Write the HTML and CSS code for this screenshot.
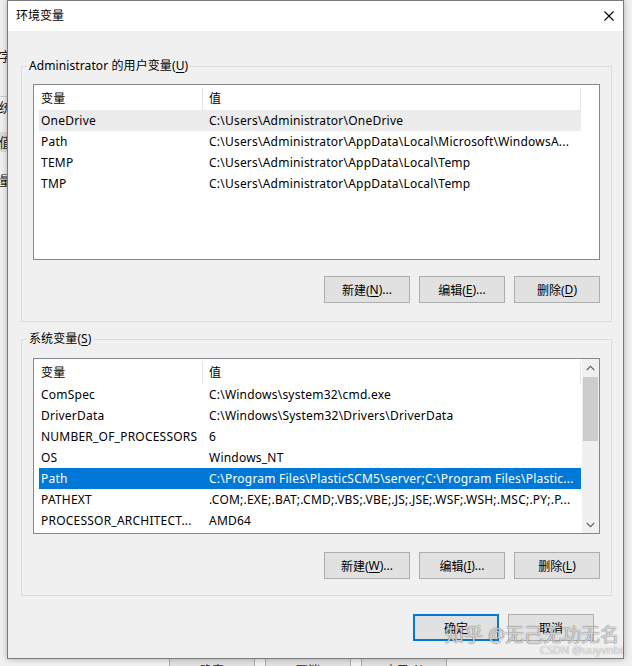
FILE: index.html
```html
<!DOCTYPE html>
<html lang="zh-CN">
<head>
<meta charset="utf-8">
<title>环境变量</title>
<link rel="stylesheet" href="styles.css">
</head>
<body>
<div class="bgwin">
  <div class="bg-side">
    <div class="bg-item bg-i1">文字</div>
    <div class="bg-item bg-i2 bg-line">系统</div>
    <div class="bg-item bg-i3 bg-sel">数值</div>
    <div class="bg-item bg-i4">变量</div>
  </div>
  <div class="bg-footer">
    <div class="bg-btn">确定</div>
    <div class="bg-btn">取消</div>
    <div class="bg-btn">应用(<u>A</u>)</div>
  </div>
</div>

<div class="dialog">
  <div class="titlebar">
    <span class="title">环境变量</span>
    <svg class="close" width="10" height="10" viewBox="0 0 10 10"><path d="M0.5 0.5 L9.5 9.5 M9.5 0.5 L0.5 9.5" stroke="#000" stroke-width="1.1" fill="none"/></svg>
  </div>
  <div class="content">
    <fieldset class="group group-user">
      <legend>Administrator 的用户变量(<u>U</u>)</legend>
      <div class="lv">
        <div class="lv-main">
          <div class="lv-head">
            <div class="c1 hd">变量</div>
            <div class="c2 hd">值</div>
          </div>
          <div class="row hover"><div class="c1">OneDrive</div><div class="c2">C:\Users\Administrator\OneDrive</div></div>
          <div class="row"><div class="c1">Path</div><div class="c2">C:\Users\Administrator\AppData\Local\Microsoft\WindowsA...</div></div>
          <div class="row"><div class="c1">TEMP</div><div class="c2">C:\Users\Administrator\AppData\Local\Temp</div></div>
          <div class="row"><div class="c1">TMP</div><div class="c2">C:\Users\Administrator\AppData\Local\Temp</div></div>
        </div>
      </div>
      <div class="btn-row">
        <div class="btn">新建(<u>N</u>)...</div>
        <div class="btn">编辑(<u>E</u>)...</div>
        <div class="btn">删除(<u>D</u>)</div>
      </div>
    </fieldset>

    <fieldset class="group group-sys">
      <legend>系统变量(<u>S</u>)</legend>
      <div class="lv">
        <div class="lv-main">
          <div class="lv-head">
            <div class="c1 hd">变量</div>
            <div class="c2 hd">值</div>
          </div>
          <div class="row"><div class="c1">ComSpec</div><div class="c2">C:\Windows\system32\cmd.exe</div></div>
          <div class="row"><div class="c1">DriverData</div><div class="c2">C:\Windows\System32\Drivers\DriverData</div></div>
          <div class="row"><div class="c1">NUMBER_OF_PROCESSORS</div><div class="c2">6</div></div>
          <div class="row"><div class="c1">OS</div><div class="c2">Windows_NT</div></div>
          <div class="row selected"><div class="c1">Path</div><div class="c2">C:\Program Files\PlasticSCM5\server;C:\Program Files\Plastic...</div></div>
          <div class="row"><div class="c1">PATHEXT</div><div class="c2">.COM;.EXE;.BAT;.CMD;.VBS;.VBE;.JS;.JSE;.WSF;.WSH;.MSC;.PY;.P...</div></div>
          <div class="row"><div class="c1">PROCESSOR_ARCHITECT...</div><div class="c2">AMD64</div></div>
        </div>
        <div class="scroll">
          <div class="sb-arrow"><svg width="9" height="6" viewBox="0 0 9 6"><path d="M0.8 5 L4.5 1.3 L8.2 5" stroke="#606060" stroke-width="1.1" fill="none"/></svg></div>
          <div class="sb-track"><div class="sb-thumb"></div></div>
          <div class="sb-arrow"><svg width="9" height="6" viewBox="0 0 9 6"><path d="M0.8 1 L4.5 4.7 L8.2 1" stroke="#606060" stroke-width="1.1" fill="none"/></svg></div>
        </div>
      </div>
      <div class="btn-row">
        <div class="btn">新建(<u>W</u>)...</div>
        <div class="btn">编辑(<u>I</u>)...</div>
        <div class="btn">删除(<u>L</u>)</div>
      </div>
    </fieldset>

    <div class="footer">
      <div class="btn btn-default">确定</div>
      <div class="btn">取消</div>
    </div>
  </div>
</div>

<div class="watermark">
  <div class="wm-main">知乎 @无己无功无名</div>
  <div class="wm-sub">CSDN @uuyvnbi</div>
</div>
</body>
</html>
```

FILE: styles.css
```css
* { box-sizing: border-box; }

html, body {
  margin: 0;
  padding: 0;
}

body {
  width: 632px;
  height: 666px;
  overflow: hidden;
  position: relative;
  background: #f0f0f0;
  font-family: "Noto Sans", "Noto Sans CJK SC", sans-serif;
  font-size: 12px;
  color: #000;
}

u { text-decoration: underline; text-underline-offset: 2px; }

/* ---------- window behind ---------- */
.bgwin {
  height: 690px;
  display: flex;
  flex-direction: column;
  background: #f0f0f0;
}

.bg-side {
  width: 12px;
  overflow: hidden;
  display: flex;
  flex-direction: column;
  padding-top: 46px;
}

.bg-item {
  width: 12px;
  height: 20px;
  line-height: 20px;
  font-size: 13px;
  direction: rtl;
  white-space: nowrap;
  color: #222;
}
.bg-i2 { margin-top: 30px; border-top: 1px solid #cfcfcf; }
.bg-i3 { margin-top: 16px; background: #dadada; }
.bg-i4 { margin-top: 18px; }

.bg-footer {
  margin-top: auto;
  display: flex;
  gap: 10px;
  padding: 0 0 9px 169px;
}

.bg-btn {
  width: 86px;
  height: 23px;
  border: 1px solid #adadad;
  background: #e1e1e1;
  display: flex;
  align-items: center;
  justify-content: center;
  font-size: 12px;
  color: #333;
}

/* ---------- dialog ---------- */
.dialog {
  position: absolute;
  left: 7px;
  top: 0;
  width: 617px;
  height: 659px;
  border: 1px solid #7a7a7a;
  background: #f0f0f0;
  box-shadow: 0 0 6px rgba(0, 0, 0, 0.28);
  display: flex;
  flex-direction: column;
}

.titlebar {
  height: 30px;
  background: #fff;
  display: flex;
  align-items: center;
  padding: 0 9px 0 8px;
  flex: none;
}

.title {
  font-size: 12px;
  line-height: 16px;
}

.close { margin-left: auto; display: block; }

.content {
  flex: 1;
  padding: 27px 11px 0 13px;
  display: flex;
  flex-direction: column;
}

.group {
  margin: 0;
  min-width: 0;
  border: 1px solid #dcdcdc;
  padding: 10px 11px 18px 11px;
}

.group legend {
  padding: 0 2px;
  margin-left: -6px;
  line-height: 16px;
  font-size: 12px;
  letter-spacing: 0.1px;
}

.group-sys {
  margin-top: 9px;
  padding-top: 11px;
  padding-bottom: 16px;
}

/* ---------- list view ---------- */
.lv {
  height: 176px;
  border: 1px solid #828790;
  background: #fff;
  display: flex;
}

.lv-main {
  flex: 1;
  min-width: 0;
  padding-left: 5px;
  letter-spacing: 0.22px;
}

.lv-head {
  display: flex;
  height: 25px;
}

.c1 {
  width: 164px;
  flex: none;
  padding-left: 2px;
  white-space: nowrap;
  overflow: hidden;
}

.c2 {
  width: 378px;
  flex: none;
  padding-left: 6px;
  white-space: nowrap;
  overflow: hidden;
}

.hd {
  display: flex;
  align-items: center;
  border-right: 1px solid #e5e5e5;
  margin-top: 3px;
  padding-bottom: 3px;
}

.row {
  display: flex;
  height: 21px;
  line-height: 21px;
  width: 542px;
}

.row.hover { background: #ececec; }

.row.selected {
  background: #0078d7;
  color: #fff;
}

/* ---------- scrollbar ---------- */
.scroll {
  width: 17px;
  flex: none;
  background: #f0f0f0;
  display: flex;
  flex-direction: column;
}

.sb-arrow {
  height: 17px;
  display: flex;
  align-items: center;
  justify-content: center;
  flex: none;
}

.sb-track {
  flex: 1;
  padding: 1px 1px 0 1px;
}

.sb-thumb {
  height: 64px;
  background: #cdcdcd;
}

/* ---------- buttons ---------- */
.btn-row {
  display: flex;
  justify-content: flex-end;
  gap: 9px;
  margin-top: 16px;
}

.group-sys .btn-row { margin-top: 18px; }

.btn {
  width: 86px;
  height: 27px;
  border: 1px solid #adadad;
  background: #e1e1e1;
  display: flex;
  align-items: center;
  justify-content: center;
  font-size: 12px;
}

.btn-default {
  border: 2px solid #0078d7;
}

.footer {
  display: flex;
  justify-content: flex-end;
  gap: 9px;
  margin-top: 18px;
  padding-right: 18px;
}

/* ---------- watermark ---------- */
.watermark {
  position: absolute;
  left: 445px;
  top: 622px;
  width: 187px;
  pointer-events: none;
}

.wm-main {
  font-size: 19px;
  line-height: 26px;
  color: rgba(255, 255, 255, 0.72);
  text-shadow: 0 0 1px rgba(60, 60, 60, 0.6), 0 0 1px rgba(60, 60, 60, 0.6);
  white-space: nowrap;
}

.wm-sub {
  margin: -5px 0 0 95px;
  font-size: 11px;
  line-height: 13px;
  color: rgba(255, 255, 255, 0.8);
  text-shadow: 0 0 1px rgba(60, 60, 60, 0.7);
  white-space: nowrap;
}
```
